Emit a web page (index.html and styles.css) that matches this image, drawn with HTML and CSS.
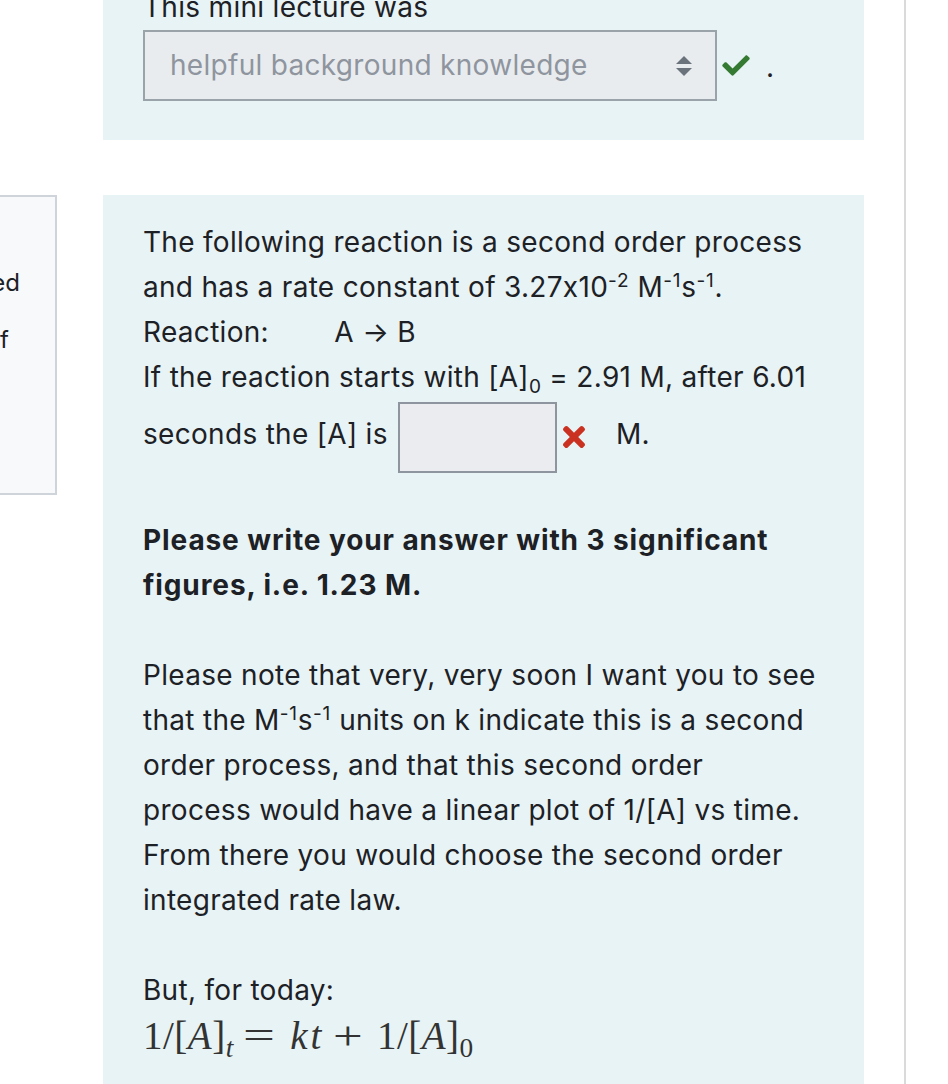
FILE: index.html
```html
<!DOCTYPE html>
<html lang="en">
<head>
<meta charset="utf-8">
<title>Question</title>
<link rel="stylesheet" href="styles.css">
</head>
<body>
<div class="page">
  <section class="panel panel-top">
    <p class="line">This mini lecture was</p>
    <div class="answer-row">
      <div class="select">
        <span class="select-text">helpful background knowledge</span>
        <svg class="select-arrows" viewBox="0 0 16 20" width="16" height="20" aria-hidden="true">
          <path d="M8 0 L16 8 L0 8 Z" fill="#6a737b"/>
          <path d="M0 12 L16 12 L8 20 Z" fill="#6a737b"/>
        </svg>
      </div>
      <svg class="icon-check" viewBox="0 60 512 392" width="28" height="21" aria-hidden="true">
        <path fill="#357a32" d="M173.898 439.404l-166.4-166.4c-9.997-9.997-9.997-26.206 0-36.204l36.203-36.204c9.997-9.998 26.207-9.998 36.204 0L192 312.69 432.095 72.596c9.997-9.997 26.207-9.997 36.204 0l36.203 36.204c9.997 9.997 9.997 26.206 0 36.204l-294.4 294.401c-9.998 9.997-26.207 9.997-36.204-.001z"/>
      </svg>
      <span class="dot">.</span>
    </div>
  </section>

  <aside class="side-box">
    <div class="side-line">Not yet answered</div>
    <div class="side-line side-line-2">Marked out of</div>
  </aside>

  <section class="panel panel-question">
    <p class="block">The following reaction is a second order process<br>and has a rate constant of 3.27x10<sup>-2</sup> M<sup>-1</sup>s<sup>-1</sup>.<br>Reaction:&nbsp;&nbsp;&nbsp;&nbsp;&nbsp;&nbsp;&nbsp; A → B<br>If the reaction starts with [A]<sub>0</sub> = 2.91 M, after 6.01<br>seconds the [A] is <input class="answer" type="text" aria-label="Answer"><svg class="icon-x" viewBox="0 80 352 352" width="22" height="22" aria-hidden="true"><path fill="#ca3120" d="M242.72 256l100.07-100.07c12.28-12.28 12.28-32.19 0-44.48l-22.24-22.24c-12.28-12.28-32.19-12.28-44.48 0L176 189.28 75.930 89.21c-12.28-12.28-32.19-12.28-44.48 0L9.21 111.45c-12.28 12.28-12.28 32.19 0 44.48L109.28 256 9.21 356.07c-12.28 12.28-12.28 32.19 0 44.48l22.24 22.24c12.28 12.28 32.2 12.28 44.48 0L176 322.72l100.07 100.07c12.28 12.28 32.2 12.28 44.48 0l22.24-22.24c12.28-12.28 12.28-32.19 0-44.48L242.72 256z"/></svg><span class="unit">M.</span></p>

    <p class="block strong">Please write your answer with 3 significant<br>figures, i.e. 1.23 M.</p>

    <p class="block">Please note that very, very soon I want you to see<br>that the M<sup>-1</sup>s<sup>-1</sup> units on k indicate this is a second<br>order process, and that this second order<br>process would have a linear plot of 1/[A] vs time.<br>From there you would choose the second order<br>integrated rate law.</p>

    <p class="line">But, for today:</p>
    <p class="math">1/[<i>A</i>]<sub class="msub"><i>t</i></sub><span class="rel">=</span><i class="kt">kt</i><span class="bin">+</span>1/[<i>A</i>]<sub class="msub">0</sub></p>
  </section>

  <div class="divider"></div>
</div>
</body>
</html>
```

FILE: styles.css
```css
html, body {
  margin: 0;
  padding: 0;
  background: #ffffff;
}

body {
  font-family: Inter, "Noto Sans", sans-serif;
  font-size: 28px;
  letter-spacing: 0.3px;
  font-feature-settings: "calt" 0;
  line-height: 45px;
  color: #1d2125;
  overflow: hidden;
}

.page {
  display: grid;
  grid-template-columns: 57px 46px 761px 40px 2px 1fr;
  grid-template-rows: auto 1fr;
  row-gap: 55px;
  margin-top: -40px;
  min-height: 1200px;
}

.panel {
  background: #e7f3f5;
  grid-column: 3;
}

.panel-top {
  grid-row: 1;
  padding: 25px 40px 39px 40px;
}

.panel-question {
  grid-row: 2;
  padding: 25px 30px 40px 40px;
}

.line {
  margin: 0;
  white-space: nowrap;
}

.answer-row {
  display: flex;
  align-items: center;
  height: 71px;
}

.select {
  box-sizing: border-box;
  width: 574px;
  height: 71px;
  border: 2px solid #9aa3aa;
  background: #e9ecef;
  display: flex;
  align-items: center;
  justify-content: space-between;
  padding: 0 23px 0 25px;
}

.select-text {
  color: #8f959e;
  white-space: nowrap;
}

.icon-check {
  margin-left: 5px;
  width: 28px;
  height: 21px;
}

.dot {
  margin-left: 16px;
  color: #1d2125;
  line-height: 45px;
  margin-top: 4px;
}

.side-box {
  grid-column: 1;
  grid-row: 2;
  align-self: start;
  box-sizing: border-box;
  height: 300px;
  background: #f8f9fa;
  border: 2px solid #ced4da;
  border-left: none;
  overflow: hidden;
  padding-top: 63px;
  font-size: 24px;
  letter-spacing: 0;
}

.side-line {
  display: flex;
  justify-content: flex-end;
  white-space: nowrap;
  padding-right: 35px;
  line-height: 45px;
}

.side-line-2 {
  margin-top: 12px;
  padding-right: 46px;
}

.block {
  margin: 0 0 45px 0;
  white-space: nowrap;
}

.strong {
  font-weight: 700;
  letter-spacing: 0.9px;
}

sup, sub {
  font-size: 0.68em;
  line-height: 0;
}

sup {
  vertical-align: 0.55em;
  letter-spacing: 0.8px;
}

sub {
  vertical-align: -0.3em;
}

.answer {
  box-sizing: border-box;
  width: 159px;
  height: 71px;
  border: 2px solid #8f959e;
  background: #ebecf0;
  vertical-align: middle;
  margin: 2px 0 0 2px;
  padding: 0 10px;
  font: inherit;
}

.icon-x {
  width: 22px;
  height: 22px;
  vertical-align: middle;
  margin-left: 6px;
}

.unit {
  margin-left: 31px;
}

.math {
  margin: 0;
  font-family: "Liberation Serif", "Times New Roman", serif;
  font-size: 39px;
  letter-spacing: 0.5px;
  line-height: 45px;
  color: #333333;
  white-space: nowrap;
}

.math .msub {
  font-size: 0.7em;
  vertical-align: -0.28em;
}

.math .rel {
  display: inline-block;
  transform: scaleX(1.45);
  margin: 0 20px 0 14px;
}

.math .kt {
  letter-spacing: 3px;
}

.math .bin {
  display: inline-block;
  transform: scaleX(1.35);
  margin: 0 17px 0 13px;
}

.divider {
  grid-column: 5;
  grid-row: 1 / 3;
  background: #dadada;
}
```
